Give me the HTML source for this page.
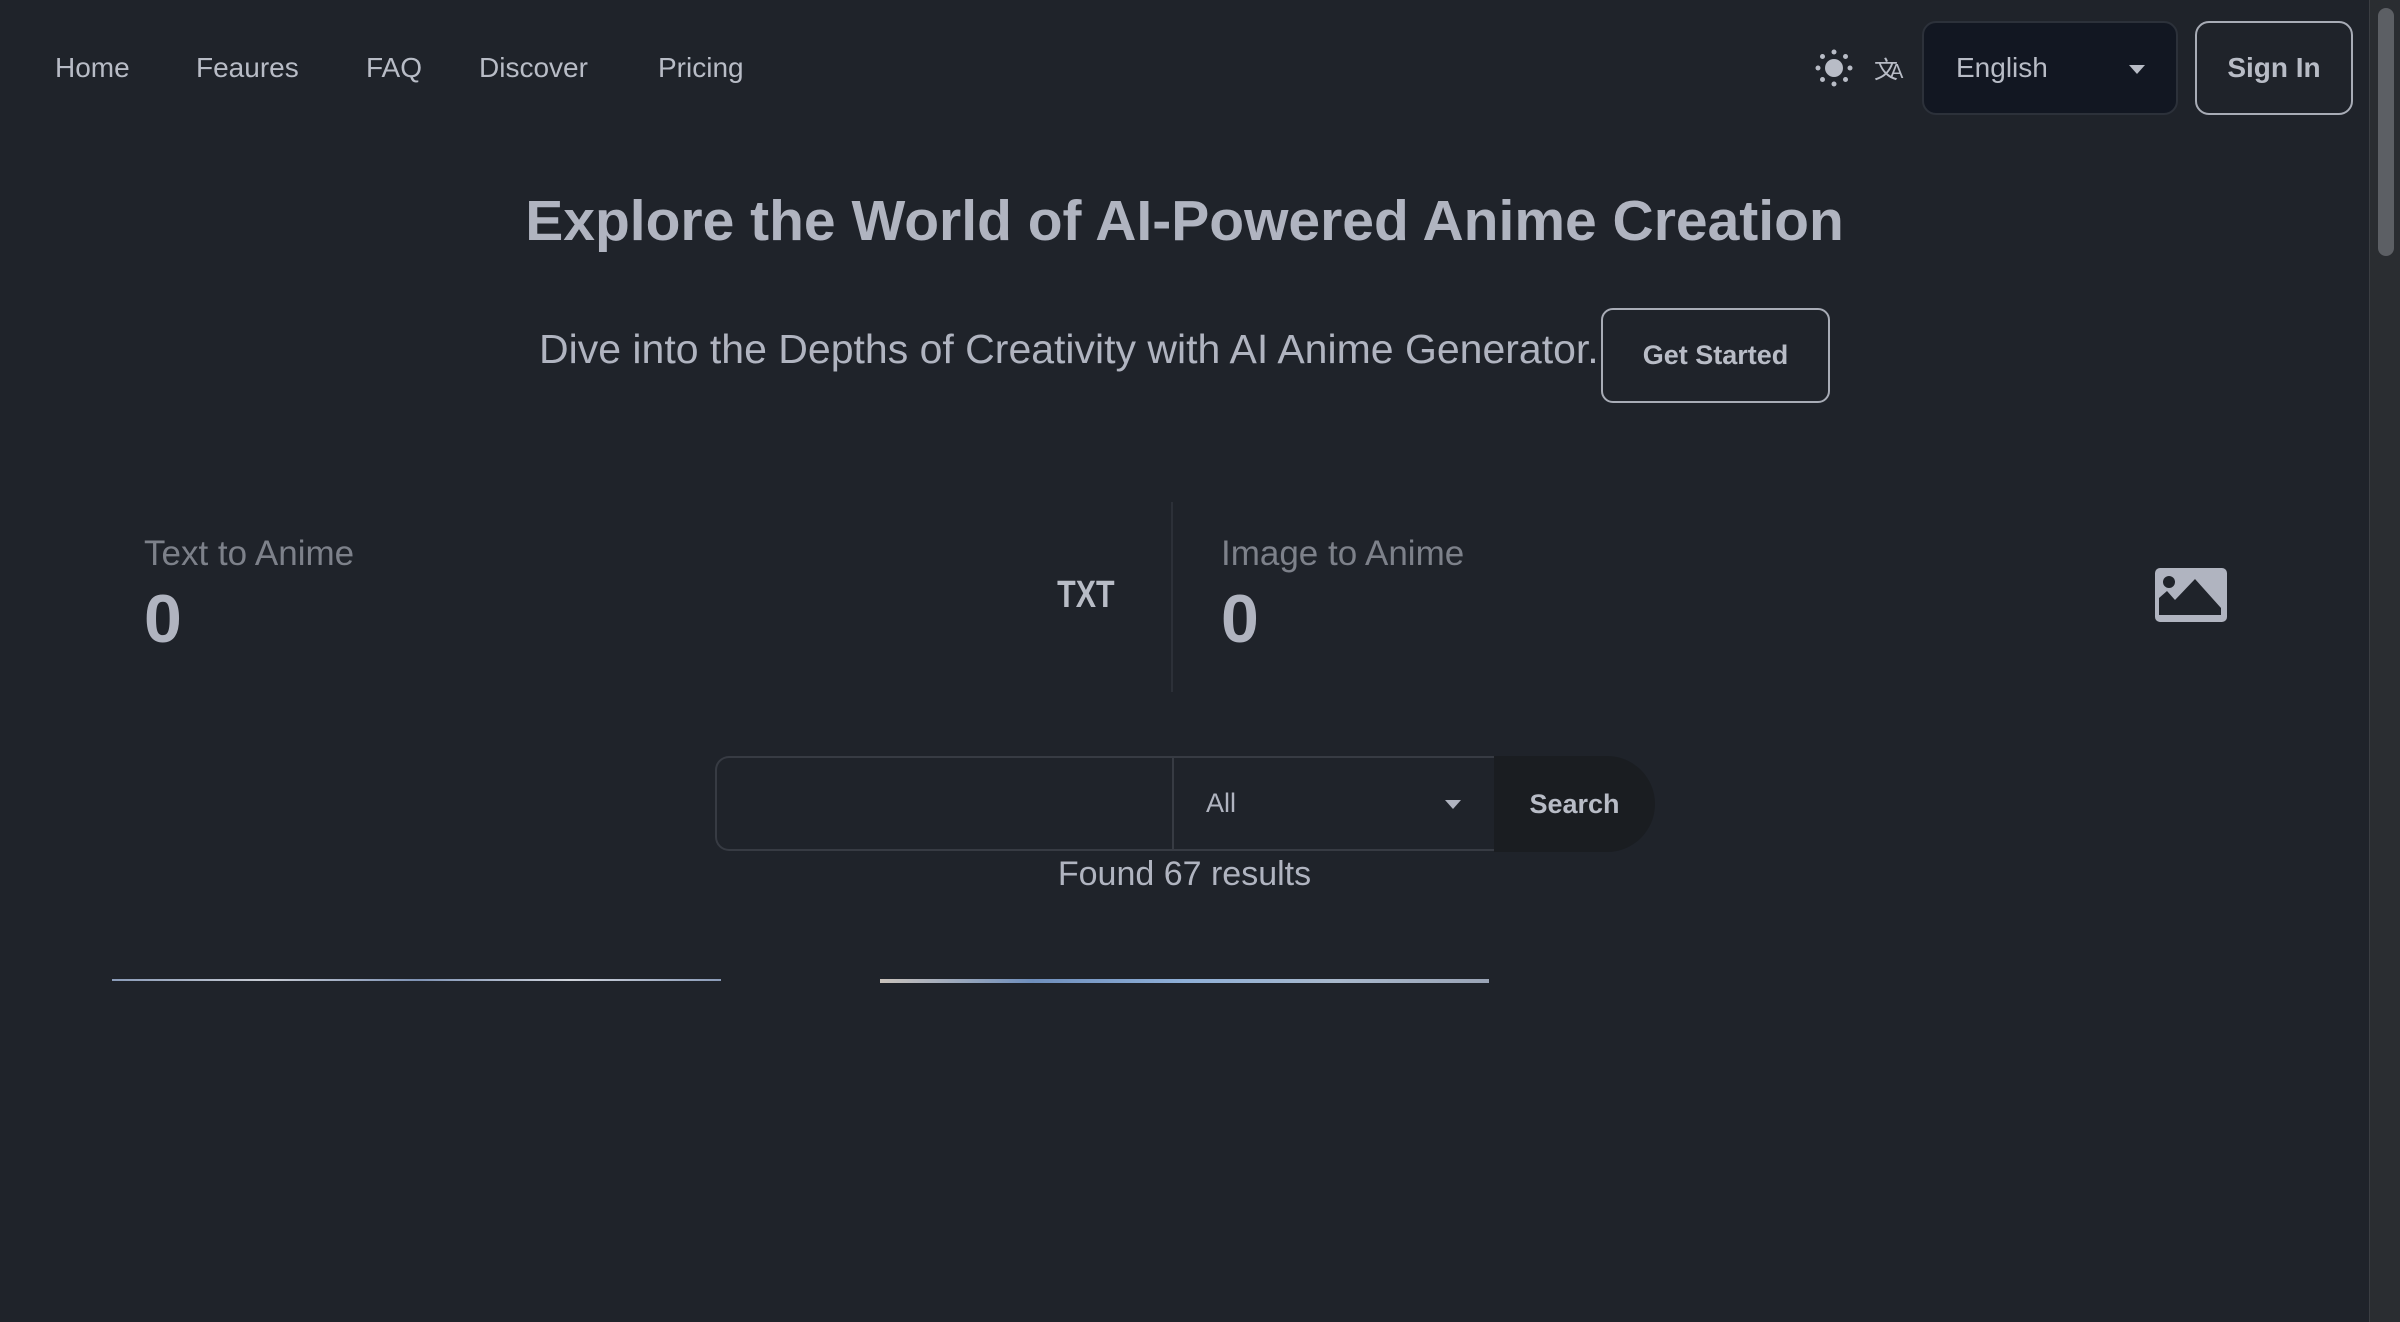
<!DOCTYPE html>
<html><head><meta charset="utf-8"><style>
*{margin:0;padding:0;box-sizing:border-box}
body{width:2400px;height:1322px;background:#1f232a;font-family:"Liberation Sans",sans-serif;color:#b2b6c2;position:relative;overflow:hidden}
.a{position:absolute;white-space:nowrap}
.nav{font-size:28px;top:52px;color:#b8bcc6}
.sb{position:absolute;left:2369px;top:0;width:31px;height:1322px;background:#2a2d31;border-left:1px solid #3a3d42}
.th{position:absolute;left:2378px;top:8px;width:16px;height:248px;background:#5c5f64;border-radius:8px}
</style></head><body>
<div class="a nav" style="left:55px">Home</div>
<div class="a nav" style="left:196px">Feaures</div>
<div class="a nav" style="left:366px">FAQ</div>
<div class="a nav" style="left:479px">Discover</div>
<div class="a nav" style="left:658px">Pricing</div>
<svg class="a" style="left:1814px;top:48px" width="40" height="40" viewBox="0 0 40 40" fill="#b8bcc6"><circle cx="20" cy="20" r="9"/><circle cx="20" cy="4" r="2.5"/><circle cx="20" cy="36" r="2.5"/><circle cx="4" cy="20" r="2.5"/><circle cx="36" cy="20" r="2.5"/><circle cx="8.5" cy="8.5" r="2.5"/><circle cx="31.5" cy="31.5" r="2.5"/><circle cx="31.5" cy="8.5" r="2.5"/><circle cx="8.5" cy="31.5" r="2.5"/></svg>
<div class="a" style="left:1874px;top:50px;font-size:24px;color:#b8bcc6">文<span style="font-size:20px;margin-left:-8px">A</span></div>
<div class="a" style="left:1922px;top:21px;width:256px;height:94px;background:#121722;border:2px solid #2c313a;border-radius:14px"></div>
<div class="a" style="left:1956px;top:52px;font-size:28px;color:#b8bcc6">English</div>
<div class="a" style="left:2129px;top:65px;width:0;height:0;border-left:8px solid transparent;border-right:8px solid transparent;border-top:9px solid #b8bcc6"></div>
<div class="a" style="left:2195px;top:21px;width:158px;height:94px;border:2px solid #a8acb6;border-radius:14px;font-size:28px;font-weight:bold;text-align:center;line-height:90px;color:#b8bcc6">Sign In</div>
<div class="a" style="left:0;width:2369px;top:188px;text-align:center;font-size:57px;font-weight:bold;color:#b0b4c0">Explore the World of AI-Powered Anime Creation</div>
<div class="a" style="left:539px;top:326px;font-size:41px;color:#b0b4c0">Dive into the Depths of Creativity with AI Anime Generator.</div>
<div class="a" style="left:1601px;top:308px;width:229px;height:95px;border:2px solid #a8acb6;border-radius:12px;font-size:27px;font-weight:bold;text-align:center;line-height:91px;color:#b8bcc6">Get Started</div>
<div class="a" style="left:144px;top:534px;font-size:35px;color:#7d818a">Text to Anime</div>
<div class="a" style="left:144px;top:580px;font-size:68px;font-weight:bold;color:#b0b4c0">0</div>
<div class="a" style="left:1050px;top:574px;font-size:38px;font-weight:bold;color:#b8bcc6;transform:scaleX(0.8)">TXT</div>
<div class="a" style="left:1171px;top:502px;width:2px;height:190px;background:#2c3038"></div>
<div class="a" style="left:1221px;top:534px;font-size:35px;color:#7d818a">Image to Anime</div>
<div class="a" style="left:1221px;top:580px;font-size:68px;font-weight:bold;color:#b0b4c0">0</div>
<svg class="a" style="left:2155px;top:568px" width="72" height="54" viewBox="0 0 72 54"><rect width="72" height="54" rx="5" fill="#b0b4c0"/><circle cx="14" cy="14" r="6" fill="#1f232a"/><path d="M4 47 L4 30 L12 23 L20 32 L40 11 L66 40 L66 47 Z" fill="#1f232a"/></svg>
<div class="a" style="left:715px;top:756px;width:780px;height:95px;border:2px solid #373b43;border-right:none;border-radius:14px 0 0 14px"></div>
<div class="a" style="left:1172px;top:757px;width:2px;height:93px;background:#373b43"></div>
<div class="a" style="left:1206px;top:788px;font-size:27px;color:#b0b4c0">All</div>
<div class="a" style="left:1445px;top:800px;width:0;height:0;border-left:8px solid transparent;border-right:8px solid transparent;border-top:9px solid #b0b4c0"></div>
<div class="a" style="left:1494px;top:756px;width:161px;height:96px;background:#1a1d21;border-radius:0 48px 48px 0;font-size:27px;font-weight:bold;text-align:center;line-height:96px;color:#b8bcc6">Search</div>
<div class="a" style="left:0;width:2369px;top:855px;text-align:center;font-size:34px;color:#b0b4c0">Found 67 results</div>
<div class="a" style="left:112px;top:979px;width:609px;height:2px;background:linear-gradient(90deg,#8a9bb8,#c8ccd4,#7f93b5,#d0d4dc,#8a9bb8)"></div>
<div class="a" style="left:880px;top:979px;width:609px;height:4px;background:linear-gradient(90deg,#c9c2bb,#6f8fbd,#8fb0d8,#a8b8cc,#9aa4b6)"></div>
<div class="sb"></div><div class="th"></div>
</body></html>
